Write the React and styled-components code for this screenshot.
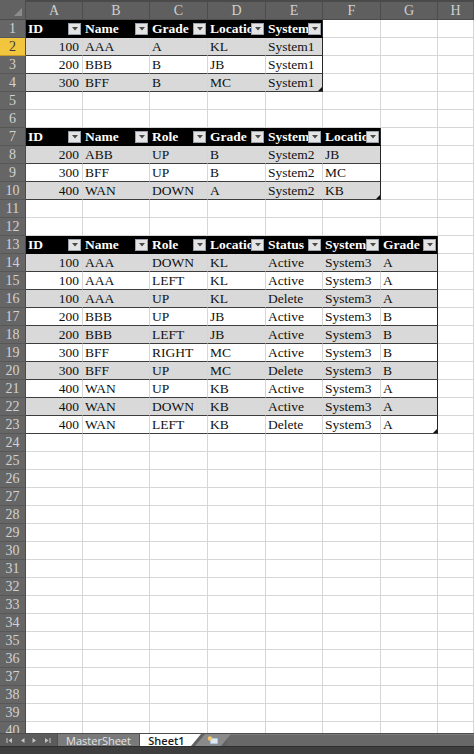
import React from 'react'
import styled, { createGlobalStyle } from 'styled-components';

const GlobalStyle = createGlobalStyle`
html, body {
  margin: 0;
  padding: 0;
  background: #4a4a4a;
  overflow: hidden;
}
`;

const COLS = [57, 67, 58, 58, 57, 58, 57];
const LETTERS = ['A', 'B', 'C', 'D', 'E', 'F', 'G', 'H'];
const ROW_COUNT = 40;

const TABLES = [
  {
    start: 1,
    head: ['ID', 'Name', 'Grade', 'Location', 'System'],
    rows: [
      ['100', 'AAA', 'A', 'KL', 'System1'],
      ['200', 'BBB', 'B', 'JB', 'System1'],
      ['300', 'BFF', 'B', 'MC', 'System1'],
    ],
  },
  {
    start: 7,
    head: ['ID', 'Name', 'Role', 'Grade', 'System', 'Location'],
    rows: [
      ['200', 'ABB', 'UP', 'B', 'System2', 'JB'],
      ['300', 'BFF', 'UP', 'B', 'System2', 'MC'],
      ['400', 'WAN', 'DOWN', 'A', 'System2', 'KB'],
    ],
  },
  {
    start: 13,
    head: ['ID', 'Name', 'Role', 'Location', 'Status', 'System', 'Grade'],
    rows: [
      ['100', 'AAA', 'DOWN', 'KL', 'Active', 'System3', 'A'],
      ['100', 'AAA', 'LEFT', 'KL', 'Active', 'System3', 'A'],
      ['100', 'AAA', 'UP', 'KL', 'Delete', 'System3', 'A'],
      ['200', 'BBB', 'UP', 'JB', 'Active', 'System3', 'B'],
      ['200', 'BBB', 'LEFT', 'JB', 'Active', 'System3', 'B'],
      ['300', 'BFF', 'RIGHT', 'MC', 'Active', 'System3', 'B'],
      ['300', 'BFF', 'UP', 'MC', 'Delete', 'System3', 'B'],
      ['400', 'WAN', 'UP', 'KB', 'Active', 'System3', 'A'],
      ['400', 'WAN', 'DOWN', 'KB', 'Active', 'System3', 'A'],
      ['400', 'WAN', 'LEFT', 'KB', 'Delete', 'System3', 'A'],
    ],
  },
];

const Frame = styled.div`
width: 474px;
height: 754px;
display: flex;
flex-direction: column;
overflow: hidden;
`;

const Sheet = styled.div`
display: grid;
grid-template-columns: 26px ${COLS.map(c => c + 'px').join(' ')} 1fr;
grid-template-rows: 20px;
grid-auto-rows: 18px;
height: 734px;
overflow: hidden;
background: #fff;
font-family: "Liberation Serif", "Times New Roman", serif;
`;

const Corner = styled.div`
background: #626262;
border-right: 1px solid #4c4c4c;
border-bottom: 1px solid #4c4c4c;
box-sizing: border-box;
display: flex;
align-items: flex-end;
justify-content: flex-end;
padding: 0 3px 3px 0;
`;

const CornerMark = styled.div`
width: 0;
height: 0;
border-left: 8px solid transparent;
border-bottom: 8px solid #8c8c8c;
`;

const ColHead = styled.div`
background: #5f5f5f;
border-top: 2px solid #4a4a4a;
border-right: 1px solid #4c4c4c;
border-bottom: 1px solid #4c4c4c;
box-sizing: border-box;
color: #cfcfcf;
font-size: 14px;
display: flex;
align-items: center;
justify-content: center;
`;

const RowHead = styled.div`
background: ${({ $active }) => ($active ? '#f2c53f' : '#666666')};
color: ${({ $active }) => ($active ? '#3a3a3a' : '#d2d2d2')};
border-bottom: 1px solid ${({ $active }) => ($active ? '#c89c26' : '#575757')};
border-right: 1px solid #4c4c4c;
box-sizing: border-box;
font-size: 14px;
display: flex;
align-items: center;
justify-content: center;
padding-top: 1px;
`;

const cellBg = { plain: '#fff', head: '#000', band: '#d9d9d9', white: '#fff' };

const Cell = styled.div`
position: relative;
box-sizing: border-box;
background: ${({ $kind }) => cellBg[$kind]};
color: ${({ $kind }) => ($kind === 'head' ? '#fff' : '#111')};
font-weight: ${({ $kind }) => ($kind === 'head' ? 700 : 400)};
font-size: 13.5px;
border-right: 1px solid ${({ $kind, $edge }) =>
  $edge ? '#262626' : $kind === 'head' ? '#000' : '#d6d6d6'};
border-bottom: 1px solid ${({ $kind }) =>
  $kind === 'plain' ? '#d6d6d6' : $kind === 'head' ? '#000' : '#3d3d3d'};
display: flex;
align-items: center;
justify-content: ${({ $right }) => ($right ? 'flex-end' : 'flex-start')};
padding: 1px 3px 0 2px;
white-space: nowrap;
overflow: hidden;
`;

const HeadText = styled.span`
flex: 1;
min-width: 0;
overflow: hidden;
`;

const FilterButton = styled.span`
flex-shrink: 0;
width: 13px;
height: 12px;
margin-right: -2px;
background: #e4e4e4;
border: 1px solid #9aa3ad;
box-sizing: border-box;
display: flex;
align-items: center;
justify-content: center;
`;

const ResizeGrip = styled.span`
position: absolute;
right: 0;
bottom: 0;
width: 0;
height: 0;
border-left: 4px solid transparent;
border-bottom: 4px solid #111;
`;

const TabBar = styled.div`
height: 13px;
display: flex;
background: #626262;
border-top: 1px solid #4e4e4e;
box-sizing: border-box;
font-family: "Open Sans", "DejaVu Sans", sans-serif;
font-size: 11px;
`;

const NavGroup = styled.div`
width: 57px;
display: flex;
align-items: center;
justify-content: space-around;
padding: 0 3px;
box-sizing: border-box;
background: #5c5c5c;
`;

const Tab = styled.div`
display: flex;
align-items: center;
justify-content: center;
width: ${({ $w }) => $w}px;
line-height: 1;
background: ${({ $active }) => ($active ? '#ffffff' : '#7a7a7a')};
color: ${({ $active }) => ($active ? '#1a1a1a' : '#e4e4e4')};
font-weight: ${({ $active }) => ($active ? 600 : 400)};
border-left: 1px solid #505050;
clip-path: ${({ $active }) =>
  $active ? 'polygon(0 0, 100% 0, calc(100% - 10px) 100%, 0 100%)' : 'none'};
padding-right: ${({ $active }) => ($active ? '8px' : '0')};
box-sizing: border-box;
`;

const AddTab = styled.div`
width: 36px;
margin-left: -6px;
background: #8a8a8a;
clip-path: polygon(10px 0, 100% 0, calc(100% - 10px) 100%, 0 100%);
display: flex;
align-items: center;
justify-content: center;
`;

const TabFill = styled.div`
flex: 1;
background: #686868;
border-top: 1px solid #7a7a7a;
margin-left: -4px;
`;

const StatusStrip = styled.div`
height: 7px;
background: #3e3e3e;
border-top: 1px solid #2e2e2e;
`;

const Triangle = () => (
  <svg width="6" height="4" viewBox="0 0 6 4">
    <polygon points="0,0 6,0 3,3.5" fill="#4a4a4a" />
  </svg>
);

const NavIcon = ({ dir, bar }) => (
  <svg width="7" height="7" viewBox="0 0 7 7">
    {dir === 'left' ? (
      <>
        {bar && <rect x="0.5" y="1" width="1" height="5" fill="#c4c4c4" />}
        <polygon points={bar ? '6,1 6,6 2.5,3.5' : '5.5,1 5.5,6 2,3.5'} fill="#c4c4c4" />
      </>
    ) : (
      <>
        <polygon points={bar ? '1,1 1,6 4.5,3.5' : '1.5,1 1.5,6 5,3.5'} fill="#c4c4c4" />
        {bar && <rect x="5.5" y="1" width="1" height="5" fill="#c4c4c4" />}
      </>
    )}
  </svg>
);

const InsertIcon = () => (
  <svg width="12" height="9" viewBox="0 0 12 9">
    <rect x="3" y="2" width="8" height="6" fill="#dfe8f2" stroke="#7c93ad" strokeWidth="0.8" />
    <circle cx="3" cy="2.5" r="2.2" fill="#f6c86a" />
  </svg>
);

function cellAt(r, c) {
  for (const t of TABLES) {
    const last = t.start + t.rows.length;
    if (r < t.start || r > last || c >= t.head.length) continue;
    const edge = c === t.head.length - 1;
    if (r === t.start) return { kind: 'head', text: t.head[c], edge };
    const i = r - t.start - 1;
    return {
      kind: i % 2 === 0 ? 'band' : 'white',
      text: t.rows[i][c],
      right: c === 0,
      edge,
      grip: edge && r === last,
    };
  }
  return { kind: 'plain' };
}

const App = () => {
  const rows = [];
  for (let r = 1; r <= ROW_COUNT; r++) {
    rows.push(<RowHead key={'h' + r} $active={r === 2}>{r}</RowHead>);
    LETTERS.forEach((_, c) => {
      const cell = cellAt(r, c);
      rows.push(
        <Cell key={r + '-' + c} $kind={cell.kind} $right={cell.right} $edge={cell.edge}>
          {cell.kind === 'head' ? (
            <>
              <HeadText>{cell.text}</HeadText>
              <FilterButton><Triangle /></FilterButton>
            </>
          ) : (
            cell.text
          )}
          {cell.grip && <ResizeGrip />}
        </Cell>
      );
    });
  }

  return (
    <Frame>
      <GlobalStyle />
      <Sheet>
        <Corner><CornerMark /></Corner>
        {LETTERS.map(l => <ColHead key={l}>{l}</ColHead>)}
        {rows}
      </Sheet>
      <TabBar>
        <NavGroup>
          <NavIcon dir="left" bar />
          <NavIcon dir="left" />
          <NavIcon dir="right" />
          <NavIcon dir="right" bar />
        </NavGroup>
        <Tab $w={82}>MasterSheet</Tab>
        <Tab $w={62} $active>Sheet1</Tab>
        <AddTab><InsertIcon /></AddTab>
        <TabFill />
      </TabBar>
      <StatusStrip />
    </Frame>
  )
}

export default App
